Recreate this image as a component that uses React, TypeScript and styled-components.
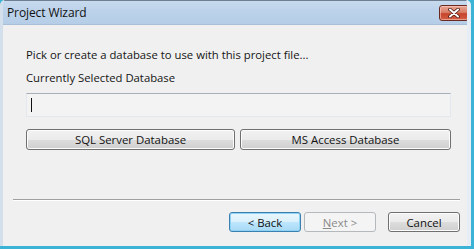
import React from "react";
import styled, { createGlobalStyle } from "styled-components";

const Global = createGlobalStyle`
  html, body { margin: 0; padding: 0; }
  body {
    width: 474px;
    height: 249px;
    overflow: hidden;
    background: #3ab3d6;
    font-family: "Open Sans", "Noto Sans", sans-serif;
    font-size: 11.3px;
    color: #141414;
  }
`;

const Window = styled.div`
  box-sizing: border-box;
  width: 471px;
  height: 246px;
  display: flex;
  flex-direction: column;
  background: #f0f0f0;
  border-left: 3px solid #d3dfeb;
  border-right: 4px solid #e6edf4;
  border-radius: 5px 5px 0 0;
  overflow: hidden;
`;

const TitleBar = styled.div`
  height: 25px;
  flex: none;
  display: flex;
  align-items: center;
  justify-content: space-between;
  margin-left: -3px;
  margin-right: -4px;
  padding-left: 7px;
  padding-right: 2px;
  background: linear-gradient(#c7daee 0%, #bcd2ea 45%, #b5cde7 100%);
  border-top: 1px solid #6f7f91;
  border-bottom: 1px solid #a9bfd8;
  box-sizing: border-box;
`;

const Title = styled.span`
  font-size: 12px;
  color: #111;
  letter-spacing: -0.1px;
`;

const CloseButton = styled.div`
  width: 30px;
  height: 16px;
  box-sizing: border-box;
  border: 1px solid #6b2a1f;
  border-radius: 3px;
  background: linear-gradient(#e9a594 0%, #d98068 45%, #c7452c 55%, #d25f44 100%);
  box-shadow: inset 0 0 0 1px rgba(255, 210, 200, 0.55);
  display: flex;
  align-items: center;
  justify-content: center;
  margin-top: 1px;
`;

const Body = styled.div`
  flex: 1;
  display: flex;
  flex-direction: column;
  padding: 22px 16px 0 23px;
`;

const Text = styled.div<{ $gap?: number }>`
  line-height: 16px;
  margin-top: ${(p) => p.$gap ?? 0}px;
  white-space: nowrap;
`;

const Input = styled.div`
  box-sizing: border-box;
  height: 24px;
  margin-top: 7px;
  border: 1px solid #e2e8ee;
  border-top-color: #a9afb8;
  background: #f3f3f3;
  display: flex;
  align-items: center;
  padding-left: 4px;
`;

const Caret = styled.div`
  width: 1px;
  height: 14px;
  background: #111;
`;

const ChoiceRow = styled.div`
  display: grid;
  grid-template-columns: 209px 1fr;
  gap: 5px;
  margin-top: 12px;
`;

const Button = styled.div<{ $variant?: "default" | "disabled" | "normal"; $w?: number }>`
  box-sizing: border-box;
  height: ${(p) => (p.$w ? 20 : 21)}px;
  width: ${(p) => (p.$w ? `${p.$w}px` : "auto")};
  border-radius: 3px;
  display: flex;
  align-items: center;
  justify-content: center;
  font-size: 11.4px;
  border: 1px solid
    ${(p) =>
      p.$variant === "default" ? "#3c7fb1" : p.$variant === "disabled" ? "#b5b9bc" : "#707070"};
  color: ${(p) => (p.$variant === "disabled" ? "#8a8a8a" : "#111")};
  background: ${(p) =>
    p.$variant === "disabled"
      ? "#f4f4f4"
      : p.$variant === "default"
      ? "linear-gradient(#eaf6fd 0%, #d9f0fc 50%, #bee6fd 51%, #a7d9f5 100%)"
      : "linear-gradient(#f2f2f2 0%, #ebebeb 50%, #dddddd 51%, #cfcfcf 100%)"};
  box-shadow: ${(p) =>
    p.$variant === "default"
      ? "inset 0 0 0 1px #8ed3f3"
      : p.$variant === "disabled"
      ? "none"
      : "inset 0 0 0 1px #fcfcfc"};
`;

const Separator = styled.div`
  height: 0;
  border-top: 1px solid #a0a0a0;
  border-bottom: 1px solid #ffffff;
  margin: 49px -9px 0 -13px;
`;

const Footer = styled.div`
  display: flex;
  justify-content: flex-end;
  align-items: center;
  margin: 11px -9px 0 0;
`;

const Spacer = styled.div<{ $w: number }>`
  width: ${(p) => p.$w}px;
`;

const Mnemonic = styled.span`
  text-decoration: underline;
`;

function CloseIcon() {
  return (
    <svg width="12" height="10" viewBox="0 0 12 10">
      <path d="M2 1.5 L10 8.5 M10 1.5 L2 8.5" stroke="#4a1a12" strokeWidth="3.6" strokeLinecap="round" />
      <path d="M2 1.5 L10 8.5 M10 1.5 L2 8.5" stroke="#ffffff" strokeWidth="2" strokeLinecap="round" />
    </svg>
  );
}

export default function App() {
  return (
    <>
      <Global />
      <Window>
        <TitleBar>
          <Title>Project Wizard</Title>
          <CloseButton>
            <CloseIcon />
          </CloseButton>
        </TitleBar>
        <Body>
          <Text>Pick or create a database to use with this project file...</Text>
          <Text $gap={7}>Currently Selected Database</Text>
          <Input>
            <Caret />
          </Input>
          <ChoiceRow>
            <Button>SQL Server Database</Button>
            <Button>MS Access Database</Button>
          </ChoiceRow>
          <Separator />
          <Footer>
            <Button $variant="default" $w={72}>&lt; Back</Button>
            <Spacer $w={3} />
            <Button $variant="disabled" $w={72}>
              <span>
                <Mnemonic>N</Mnemonic>ext &gt;
              </span>
            </Button>
            <Spacer $w={12} />
            <Button $w={72}>Cancel</Button>
          </Footer>
        </Body>
      </Window>
    </>
  );
}
